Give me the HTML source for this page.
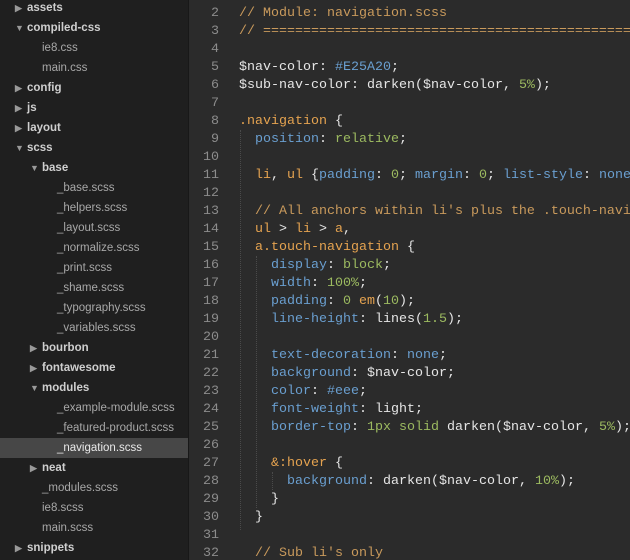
<!DOCTYPE html>
<html><head><style>
html,body{margin:0;width:630px;height:560px;overflow:hidden}
body{background:#2b2b2b;position:relative;font-family:"Liberation Sans",sans-serif}
#side{position:absolute;left:0;top:0;width:188px;height:560px;background:#1f1f1f;border-right:1px solid #181818;overflow:hidden}
.r{position:absolute;left:0;width:188px;height:20px;line-height:20px;font-size:11.5px;color:#cfcfcf;font-weight:bold;white-space:nowrap}
.f{font-weight:normal;color:#a8a8a8}
.sel{background:#474747;color:#e8e8e8}
.a{position:absolute;font-size:9px;color:#999;top:0}
#ed{position:absolute;left:189px;top:0;width:441px;height:560px;overflow:hidden}
.l{position:absolute;left:0;height:18px;line-height:18px;font-family:"Liberation Mono",monospace;font-size:13.33px;white-space:pre;color:#e6e6e6}
.n{position:absolute;left:0;width:30px;text-align:right;color:#8c8c8c}
.c{position:absolute;left:50px}
.cm{color:#c99a5c}.p{color:#6a9fd0}.v{color:#9cba60}.s{color:#e5a350}.h{color:#6a9fd0}
.g{position:absolute;top:0;width:0;border-left:1px dotted #4a4a4a}
</style></head><body>
<div id="side">
<div class="r" style="top:-2px"><span class="a" style="left:15px">▶</span><span style="position:absolute;left:27px">assets</span></div>
<div class="r" style="top:18px"><span class="a" style="left:15px">▼</span><span style="position:absolute;left:27px">compiled-css</span></div>
<div class="r f" style="top:38px"><span style="position:absolute;left:42px">ie8.css</span></div>
<div class="r f" style="top:58px"><span style="position:absolute;left:42px">main.css</span></div>
<div class="r" style="top:78px"><span class="a" style="left:15px">▶</span><span style="position:absolute;left:27px">config</span></div>
<div class="r" style="top:98px"><span class="a" style="left:15px">▶</span><span style="position:absolute;left:27px">js</span></div>
<div class="r" style="top:118px"><span class="a" style="left:15px">▶</span><span style="position:absolute;left:27px">layout</span></div>
<div class="r" style="top:138px"><span class="a" style="left:15px">▼</span><span style="position:absolute;left:27px">scss</span></div>
<div class="r" style="top:158px"><span class="a" style="left:30px">▼</span><span style="position:absolute;left:42px">base</span></div>
<div class="r f" style="top:178px"><span style="position:absolute;left:57px">_base.scss</span></div>
<div class="r f" style="top:198px"><span style="position:absolute;left:57px">_helpers.scss</span></div>
<div class="r f" style="top:218px"><span style="position:absolute;left:57px">_layout.scss</span></div>
<div class="r f" style="top:238px"><span style="position:absolute;left:57px">_normalize.scss</span></div>
<div class="r f" style="top:258px"><span style="position:absolute;left:57px">_print.scss</span></div>
<div class="r f" style="top:278px"><span style="position:absolute;left:57px">_shame.scss</span></div>
<div class="r f" style="top:298px"><span style="position:absolute;left:57px">_typography.scss</span></div>
<div class="r f" style="top:318px"><span style="position:absolute;left:57px">_variables.scss</span></div>
<div class="r" style="top:338px"><span class="a" style="left:30px">▶</span><span style="position:absolute;left:42px">bourbon</span></div>
<div class="r" style="top:358px"><span class="a" style="left:30px">▶</span><span style="position:absolute;left:42px">fontawesome</span></div>
<div class="r" style="top:378px"><span class="a" style="left:30px">▼</span><span style="position:absolute;left:42px">modules</span></div>
<div class="r f" style="top:398px"><span style="position:absolute;left:57px">_example-module.scss</span></div>
<div class="r f" style="top:418px"><span style="position:absolute;left:57px">_featured-product.scss</span></div>
<div class="r f sel" style="top:438px"><span style="position:absolute;left:57px;color:#e8e8e8">_navigation.scss</span></div>
<div class="r" style="top:458px"><span class="a" style="left:30px">▶</span><span style="position:absolute;left:42px">neat</span></div>
<div class="r f" style="top:478px"><span style="position:absolute;left:42px">_modules.scss</span></div>
<div class="r f" style="top:498px"><span style="position:absolute;left:42px">ie8.scss</span></div>
<div class="r f" style="top:518px"><span style="position:absolute;left:42px">main.scss</span></div>
<div class="r" style="top:538px"><span class="a" style="left:15px">▶</span><span style="position:absolute;left:27px">snippets</span></div>
</div>
<div id="ed">
<div class="g" style="left:51px;top:130px;height:400px"></div>
<div class="g" style="left:67px;top:256px;height:252px"></div>
<div class="g" style="left:83px;top:472px;height:18px"></div>
<div class="l" style="top:-13px"><span class="n">1</span><span class="c cm">//</span></div>
<div class="l" style="top:5px"><span class="n">2</span><span class="c cm">// Module: navigation.scss</span></div>
<div class="l" style="top:23px"><span class="n">3</span><span class="c cm">// ==============================================</span></div>
<div class="l" style="top:41px"><span class="n">4</span></div>
<div class="l" style="top:59px"><span class="n">5</span><span class="c">$nav-color: <span class="h">#E25A20</span>;</span></div>
<div class="l" style="top:77px"><span class="n">6</span><span class="c">$sub-nav-color: darken($nav-color, <span class="v">5%</span>);</span></div>
<div class="l" style="top:95px"><span class="n">7</span></div>
<div class="l" style="top:113px"><span class="n">8</span><span class="c"><span class="s">.navigation</span> {</span></div>
<div class="l" style="top:131px"><span class="n">9</span><span class="c">  <span class="p">position</span>: <span class="v">relative</span>;</span></div>
<div class="l" style="top:149px"><span class="n">10</span></div>
<div class="l" style="top:167px"><span class="n">11</span><span class="c">  <span class="s">li</span>, <span class="s">ul</span> {<span class="p">padding</span>: <span class="v">0</span>; <span class="p">margin</span>: <span class="v">0</span>; <span class="p">list-style</span>: <span class="p">none</span></span></div>
<div class="l" style="top:185px"><span class="n">12</span></div>
<div class="l" style="top:203px"><span class="n">13</span><span class="c cm">  // All anchors within li's plus the .touch-navi</span></div>
<div class="l" style="top:221px"><span class="n">14</span><span class="c">  <span class="s">ul</span> &gt; <span class="s">li</span> &gt; <span class="s">a</span>,</span></div>
<div class="l" style="top:239px"><span class="n">15</span><span class="c">  <span class="s">a.touch-navigation</span> {</span></div>
<div class="l" style="top:257px"><span class="n">16</span><span class="c">    <span class="p">display</span>: <span class="v">block</span>;</span></div>
<div class="l" style="top:275px"><span class="n">17</span><span class="c">    <span class="p">width</span>: <span class="v">100%</span>;</span></div>
<div class="l" style="top:293px"><span class="n">18</span><span class="c">    <span class="p">padding</span>: <span class="v">0</span> <span class="s">em</span>(<span class="v">10</span>);</span></div>
<div class="l" style="top:311px"><span class="n">19</span><span class="c">    <span class="p">line-height</span>: lines(<span class="v">1.5</span>);</span></div>
<div class="l" style="top:329px"><span class="n">20</span></div>
<div class="l" style="top:347px"><span class="n">21</span><span class="c">    <span class="p">text-decoration</span>: <span class="p">none</span>;</span></div>
<div class="l" style="top:365px"><span class="n">22</span><span class="c">    <span class="p">background</span>: $nav-color;</span></div>
<div class="l" style="top:383px"><span class="n">23</span><span class="c">    <span class="p">color</span>: <span class="h">#eee</span>;</span></div>
<div class="l" style="top:401px"><span class="n">24</span><span class="c">    <span class="p">font-weight</span>: light;</span></div>
<div class="l" style="top:419px"><span class="n">25</span><span class="c">    <span class="p">border-top</span>: <span class="v">1px</span> <span class="v">solid</span> darken($nav-color, <span class="v">5%</span>);</span></div>
<div class="l" style="top:437px"><span class="n">26</span></div>
<div class="l" style="top:455px"><span class="n">27</span><span class="c">    <span class="s">&amp;:hover</span> {</span></div>
<div class="l" style="top:473px"><span class="n">28</span><span class="c">      <span class="p">background</span>: darken($nav-color, <span class="v">10%</span>);</span></div>
<div class="l" style="top:491px"><span class="n">29</span><span class="c">    }</span></div>
<div class="l" style="top:509px"><span class="n">30</span><span class="c">  }</span></div>
<div class="l" style="top:527px"><span class="n">31</span></div>
<div class="l" style="top:545px"><span class="n">32</span><span class="c cm">  // Sub li's only</span></div>
</div>
</body></html>
